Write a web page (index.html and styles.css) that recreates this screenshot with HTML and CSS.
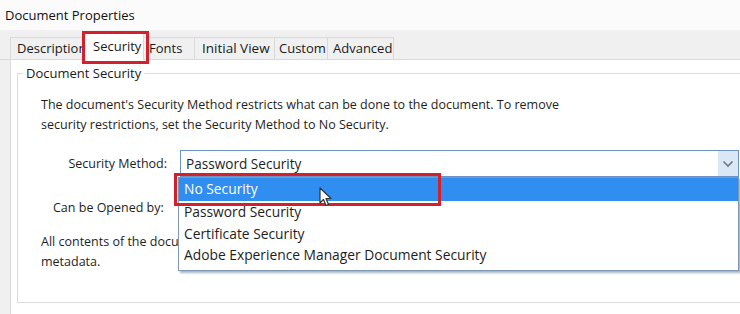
FILE: index.html
```html
<!DOCTYPE html>
<html>
<head>
<meta charset="utf-8">
<link rel="stylesheet" href="styles.css">
</head>
<body>
<div class="window">
  <div class="titlebar">Document Properties</div>
  <div class="tabs">
    <div class="tab t-desc">Description</div>
    <div class="tab t-sec active">Security</div>
    <div class="tab t-fonts">Fonts</div>
    <div class="tab t-init">Initial View</div>
    <div class="tab t-cust">Custom</div>
    <div class="tab t-adv">Advanced</div>
  </div>
  <div class="panel">
    <div class="group">
      <div class="legend">Document Security</div>
      <p class="intro">The document's Security Method restricts what can be done to the document. To remove<br>security restrictions, set the Security Method to No Security.</p>
      <div class="row row-method">
        <label class="lbl">Security Method:</label>
        <div class="select">
          <span class="select-value">Password Security</span>
          <span class="select-btn">
            <svg width="12" height="8" viewBox="0 0 12 8"><path d="M1.5 1.5 L6 6 L10.5 1.5" fill="none" stroke="#6d7a86" stroke-width="1.6"/></svg>
          </span>
          <ul class="list">
            <li class="sel">No Security</li>
            <li>Password Security</li>
            <li>Certificate Security</li>
            <li>Adobe Experience Manager Document Security</li>
          </ul>
        </div>
      </div>
      <div class="row row-open">
        <label class="lbl">Can be Opened by:</label>
      </div>
      <p class="note">All contents of the document are encrypted and search engines cannot access the document's<br>metadata.</p>
    </div>
  </div>
  <div class="mark mark-tab"></div>
  <div class="mark mark-item"></div>
  <svg class="cursor" width="14" height="22" viewBox="0 0 14 22">
    <path d="M1 1 L1 16 L4.5 12.5 L7 18.5 L9.5 17.5 L7 11.5 L12 11.5 Z" fill="#fff" stroke="#333" stroke-width="1.2" stroke-linejoin="round"/>
  </svg>
</div>
</body>
</html>
```

FILE: styles.css
```css
html, body {
  margin: 0;
  padding: 0;
}
body {
  width: 740px;
  height: 314px;
  overflow: hidden;
  background: #f0f0f0;
  font-family: "Open Sans", "Noto Sans", "Liberation Sans", sans-serif;
  font-size: 12.5px;
  color: #1e1e1e;
}
.window {
  position: relative;
  width: 740px;
  height: 314px;
  display: flex;
  flex-direction: column;
}
.titlebar {
  height: 30px;
  line-height: 30px;
  padding-left: 5px;
  background: #fbfbfb;
  font-size: 13px;
  color: #111;
}
.tabs {
  height: 30px;
  display: flex;
  align-items: flex-end;
  padding-left: 10px;
  background: #f0f0f0;
  border-bottom: 1px solid #d9d9d9;
  box-sizing: border-box;
}
.tab {
  height: 22px;
  line-height: 21px;
  box-sizing: border-box;
  border: 1px solid #d9d9d9;
  border-bottom: none;
  border-left: none;
  padding-left: 6px;
  font-size: 13px;
  color: #1a1a1a;
  background: #f0f0f0;
  white-space: nowrap;
  overflow: hidden;
}
.t-desc { width: 76px; border-left: 1px solid #d9d9d9; }
.t-sec { width: 60px; }
.t-fonts { width: 51px; padding-left: 5px; }
.t-init { width: 80px; padding-left: 7px; font-size: 13.5px; }
.t-cust { width: 53px; padding-left: 4px; }
.t-adv { width: 66px; padding-left: 5px; }
.tab.active {
  height: 27px;
  line-height: 24px;
  background: #fff;
  margin-bottom: -1px;
  padding-left: 8px;
  border-left: 1px solid #d9d9d9;
  margin-left: -2px;
  position: relative;
  z-index: 1;
}
.panel {
  flex: 1;
  margin-left: 10px;
  background: #fff;
  border-left: 1px solid #d9d9d9;
  padding: 13px 0 0 6px;
}
.group {
  position: relative;
  height: 228px;
  border: 1px solid #dcdcdc;
  border-right: none;
  padding-left: 23px;
}
.legend {
  position: absolute;
  top: -9px;
  left: 5px;
  padding: 0 3px;
  background: #fff;
  font-size: 13px;
  line-height: 16px;
  color: #1a1a1a;
}
.intro {
  margin: 21px 0 0 0;
  line-height: 20px;
}
.row {
  display: flex;
  align-items: center;
}
.row-method {
  margin-top: 15px;
  height: 27px;
}
.lbl {
  width: 139px;
  text-align: right;
  padding-right: 13px;
  box-sizing: border-box;
}
.select {
  position: relative;
  flex: 1;
  height: 27px;
  margin-right: 1px;
  box-sizing: border-box;
  border: 1px solid #6b93c4;
  background: #fff;
  display: flex;
  align-items: center;
  font-size: 13.6px;
}
.select-value {
  flex: 1;
  padding-left: 5px;
}
.select-btn {
  width: 20px;
  height: 25px;
  background: #dbe7f4;
  display: flex;
  align-items: center;
  justify-content: center;
}
.list {
  position: absolute;
  left: -3px;
  right: -1px;
  top: 26px;
  margin: 0;
  padding: 0 0 4px 0;
  list-style: none;
  background: #fff;
  border: 1px solid #7d98b0;
  box-shadow: 2px 2px 2px rgba(90, 120, 150, 0.55);
  z-index: 2;
  font-size: 13.8px;
}
.list li {
  height: 21.5px;
  line-height: 21px;
  padding-left: 5px;
}
.list li.sel {
  height: 23px;
  line-height: 22px;
  background: #2f8ef0;
  color: #fff;
}
.row-open {
  margin-top: 22px;
}
.row-open .lbl {
  width: 142px;
  padding-right: 0;
  text-align: left;
  padding-left: 12px;
}
.note {
  margin: 16px 0 0 0;
  line-height: 20px;
  white-space: nowrap;
}
.mark {
  position: absolute;
  border: 3px solid #d4202c;
  box-sizing: border-box;
  z-index: 5;
}
.mark-tab {
  left: 82px;
  top: 31px;
  width: 67px;
  height: 33px;
}
.mark-item {
  left: 174px;
  top: 173px;
  width: 267px;
  height: 33px;
}
.cursor {
  position: absolute;
  left: 319px;
  top: 187px;
  z-index: 6;
}
```
